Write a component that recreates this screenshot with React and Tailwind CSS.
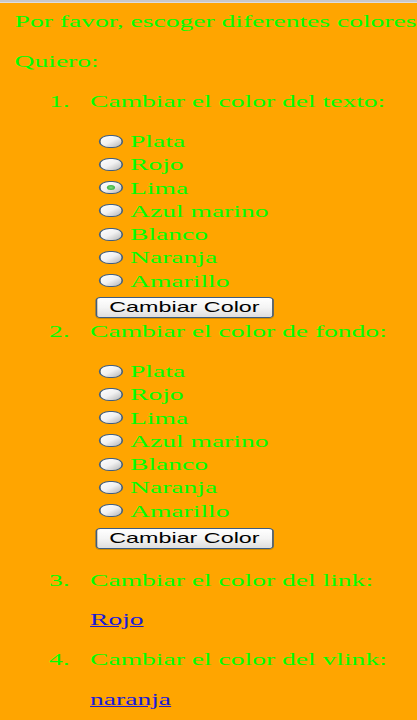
import React, { useState } from 'react';

const COLORES = ['Plata', 'Rojo', 'Lima', 'Azul marino', 'Blanco', 'Naranja', 'Amarillo'];

// old-school round radio, drawn by hand so it looks like the classic control
const Radio = ({ checked, onClick }) => (
  <span
    onClick={onClick}
    className="-mt-[2px] flex h-[13px] w-[15.4px] shrink-0 cursor-pointer items-center justify-center rounded-full border border-[#3f5f85] bg-linear-to-br from-white via-[#f1f1f1] to-[#b5b5b5]"
  >
    {checked && <span className="h-[5px] w-[5px] rounded-full bg-radial from-[#7be07b] to-[#1f9a1f]" />}
  </span>
);

const ColorGroup = ({ value, onChange }) => (
  <div className="ml-[5px] mt-[18.5px] flex flex-col">
    {COLORES.map((c) => (
      <label key={c} className="flex h-[23.25px] items-center gap-[4.3px]">
        <Radio checked={value === c} onClick={() => onChange(c)} />
        <span>{c}</span>
      </label>
    ))}
  </div>
);

const Boton = ({ className = '' }) => (
  <button
    className={`ml-[3px] block h-[21px] w-[110.5px] rounded-[3px] border border-[#3d5c82] bg-linear-to-b from-white via-[#f4f4f4] to-[#dedede] font-['Liberation_Sans',Arial,sans-serif] text-[14.4px] leading-none text-black shadow-[0_1px_0_#d08c00] ${className}`}
  >
    Cambiar Color
  </button>
);

const Item = ({ n, title, className = '', children }) => (
  <li className={`flex flex-col ${className}`}>
    <div className="flex">
      <span className="ml-[21.3px] w-[25.3px]">{n}</span>
      <span>{title}</span>
    </div>
    <div className="flex flex-col pl-[46.6px]">{children}</div>
  </li>
);

export default function App() {
  const [texto, setTexto] = useState('Lima');
  const [fondo, setFondo] = useState(null);

  return (
    <div className="h-[720px] w-[417px] overflow-hidden bg-[#ffa500]">
      <div className="h-[2px] bg-[#c8c8c8]" />
      <div className="h-px bg-[#dedede]" />

      <div className="w-[257px] origin-top-left scale-x-[1.62] pl-[9px] font-['Liberation_Serif','Times_New_Roman',serif] text-[17px] leading-[20px] text-[#00ff00]">
        <p className="mt-[9px] whitespace-nowrap">Por favor, escoger diferentes colores:</p>
        <p className="mt-[20px]">Quiero:</p>

        <ol className="flex flex-col">
          <Item n="1." title="Cambiar el color del texto:" className="mt-[20px]">
            <ColorGroup value={texto} onChange={setTexto} />
            <Boton className="mt-[3.75px]" />
          </Item>

          <Item n="2." title="Cambiar el color de fondo:" className="mt-[4px]">
            <ColorGroup value={fondo} onChange={setFondo} />
            <Boton className="mt-[4.5px]" />
          </Item>

          <Item n="3." title="Cambiar el color del link:" className="mt-[22.5px]">
            <a href="#" className="mt-[19px] self-start text-[#1a1ad8] underline">
              Rojo
            </a>
          </Item>

          <Item n="4." title="Cambiar el color del vlink:" className="mt-[20px]">
            <a href="#" className="mt-[20px] self-start text-[#1a1ad8] underline">
              naranja
            </a>
          </Item>
        </ol>
      </div>
    </div>
  );
}
